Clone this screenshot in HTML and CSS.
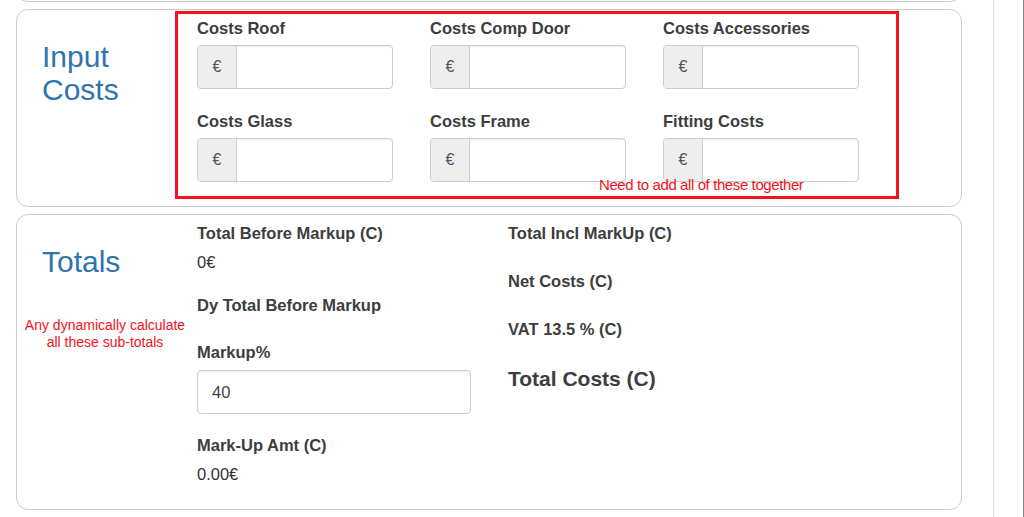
FILE: index.html
```html
<!DOCTYPE html>
<html lang="en">

<head>
  <meta charset="UTF-8">
  <meta name="viewport" content="width=device-width, initial-scale=1.0">

  <title>Quote costs</title>
  <link rel="stylesheet" href="styles.css">
</head>

<body>
  <div class="page">
    <main class="content">
      <div class="panel panel-tail"></div>

      <section class="panel">
        <div class="panel-side">
          <h2 class="panel-title">Input<br>Costs</h2>
        </div>

        <div class="cost-box">
          <div class="cost-grid">
            <div class="field">
              <label for="costs-roof">Costs Roof</label>
              <div class="input-group"><span class="addon">€</span><input type="text" id="costs-roof"></div>
            </div>
            <div class="field">
              <label for="costs-door">Costs Comp Door</label>
              <div class="input-group"><span class="addon">€</span><input type="text" id="costs-door"></div>
            </div>
            <div class="field">
              <label for="costs-accessories">Costs Accessories</label>
              <div class="input-group"><span class="addon">€</span><input type="text" id="costs-accessories"></div>
            </div>
            <div class="field">
              <label for="costs-glass">Costs Glass</label>
              <div class="input-group"><span class="addon">€</span><input type="text" id="costs-glass"></div>
            </div>
            <div class="field">
              <label for="costs-frame">Costs Frame</label>
              <div class="input-group"><span class="addon">€</span><input type="text" id="costs-frame"></div>
            </div>
            <div class="field">
              <label for="fitting-costs">Fitting Costs</label>
              <div class="input-group"><span class="addon">€</span><input type="text" id="fitting-costs"></div>
            </div>
          </div>

          <!-- annotation -->
          <p class="note note-box">Need to add all of these together</p>
        </div>
      </section>

      <section class="panel">
        <div class="panel-side">
          <h2 class="panel-title">Totals</h2>
          <p class="note note-side">Any dynamically calculate<br>all these sub-totals</p>
        </div>

        <div class="totals-grid">
          <div class="totals-col">
            <div class="stat">
              <div class="stat-label">Total Before Markup (C)</div>
              <div class="stat-value">0€</div>
            </div>
            <div class="stat stat-pending">
              <div class="stat-label">Dy Total Before Markup</div>
            </div>
            <div class="markup-field">
              <label class="stat-label" for="markup">Markup%</label>
              <input type="text" id="markup" class="markup-input" value="40">
            </div>
            <div class="stat">
              <div class="stat-label">Mark-Up Amt (C)</div>
              <div class="stat-value">0.00€</div>
            </div>
          </div>

          <div class="totals-col">
            <div class="sum-line">Total Incl MarkUp (C)</div>
            <div class="sum-line">Net Costs (C)</div>
            <div class="sum-line">VAT 13.5 % (C)</div>
            <div class="sum-total">Total Costs (C)</div>
          </div>
        </div>
      </section>
    </main>

    <div class="rail"></div>
  </div>
</body>
</html>
```

FILE: styles.css
```css
/* Styles for the costs page */

html,
body {
  margin: 0;
  height: 100%;
  overflow: hidden;
}

body {
  background-color: #fff;
  color: #3d3d3d;
  font-family: "Liberation Sans", Arial, sans-serif;
  font-size: 16.5px;
  line-height: 20px;
}

.page {
  display: flex;
  min-height: 100vh;
}

.content {
  flex: 0 0 993px;
  box-sizing: border-box;
  padding: 0 31px 0 16px;
}

.rail {
  flex: 1;
  border-left: 1px solid #ddd;
  border-right: 1px solid #888;
}

/* cards */

.panel {
  display: flex;
  margin-top: 7px;
  border: 1px solid #ccc;
  border-radius: 12px;
}

.panel-tail {
  height: 12px;
  margin-top: -11px;
  border-top: none;
  border-radius: 0 0 12px 12px;
}

.panel-side {
  flex: 0 0 158px;
  width: 158px;
  min-width: 0;
  box-sizing: border-box;
  padding-left: 25px;
}

.panel-title {
  margin: 30px 0 0;
  color: #2f74ad;
  font-size: 30px;
  font-weight: normal;
  line-height: 33px;
}

.note {
  margin: 0;
  color: #f5121c;
}

.note-side {
  width: 166px;
  margin: 39px 0 0 -20px;
  font-size: 14px;
  line-height: 17px;
  text-align: center;
  white-space: nowrap;
}

.note-box {
  position: absolute;
  left: 421px;
  top: 162px;
  font-size: 15px;
  line-height: 17px;
  letter-spacing: -0.4px;
  white-space: nowrap;
}

/* input costs */

.cost-box {
  position: relative;
  box-sizing: border-box;
  width: 724px;
  margin: 1px 0 7px;
  border: 3px solid #f5121c;
}

.cost-grid {
  display: grid;
  grid-template-columns: repeat(3, 196px);
  column-gap: 37px;
  row-gap: 22px;
  padding: 4px 0 14px 19px;
}

.field label,
.stat-label {
  display: block;
  font-weight: bold;
}

.field label {
  margin-bottom: 7px;
}

.input-group {
  display: flex;
  box-sizing: border-box;
  height: 44px;
  border: 1px solid #ccc;
  border-radius: 4px;
  overflow: hidden;
  box-shadow: inset 0 1px 1px rgba(0, 0, 0, 0.075);
}

.addon {
  display: flex;
  align-items: center;
  justify-content: center;
  flex: 0 0 38px;
  background-color: #eee;
  border-right: 1px solid #ccc;
  color: #555;
  font-size: 16px;
}

.input-group input {
  flex: 1;
  min-width: 0;
  border: none;
  background: transparent;
  font: inherit;
}

/* totals */

.totals-grid {
  display: grid;
  grid-template-columns: 274px 274px;
  column-gap: 37px;
  align-content: start;
  padding: 8px 0 25px 22px;
}

.stat {
  margin-bottom: 23px;
}

.stat:last-child {
  margin-bottom: 0;
}

.stat .stat-label {
  margin-bottom: 9px;
}

.stat-value {
  color: #333;
}

.stat-pending {
  margin-bottom: 27px;
}

.stat-pending .stat-label {
  margin-bottom: 0;
}

.markup-field {
  margin-bottom: 21px;
}

.markup-field .stat-label {
  margin-bottom: 8px;
}

.markup-input {
  display: block;
  box-sizing: border-box;
  width: 274px;
  height: 44px;
  padding: 0 14px;
  border: 1px solid #ccc;
  border-radius: 4px;
  box-shadow: inset 0 1px 1px rgba(0, 0, 0, 0.075);
  color: #444;
  font: inherit;
}

.sum-line {
  margin-bottom: 28px;
  font-weight: bold;
}

.sum-total {
  margin-top: 1px;
  font-size: 21px;
  font-weight: bold;
  line-height: 24px;
}
```
